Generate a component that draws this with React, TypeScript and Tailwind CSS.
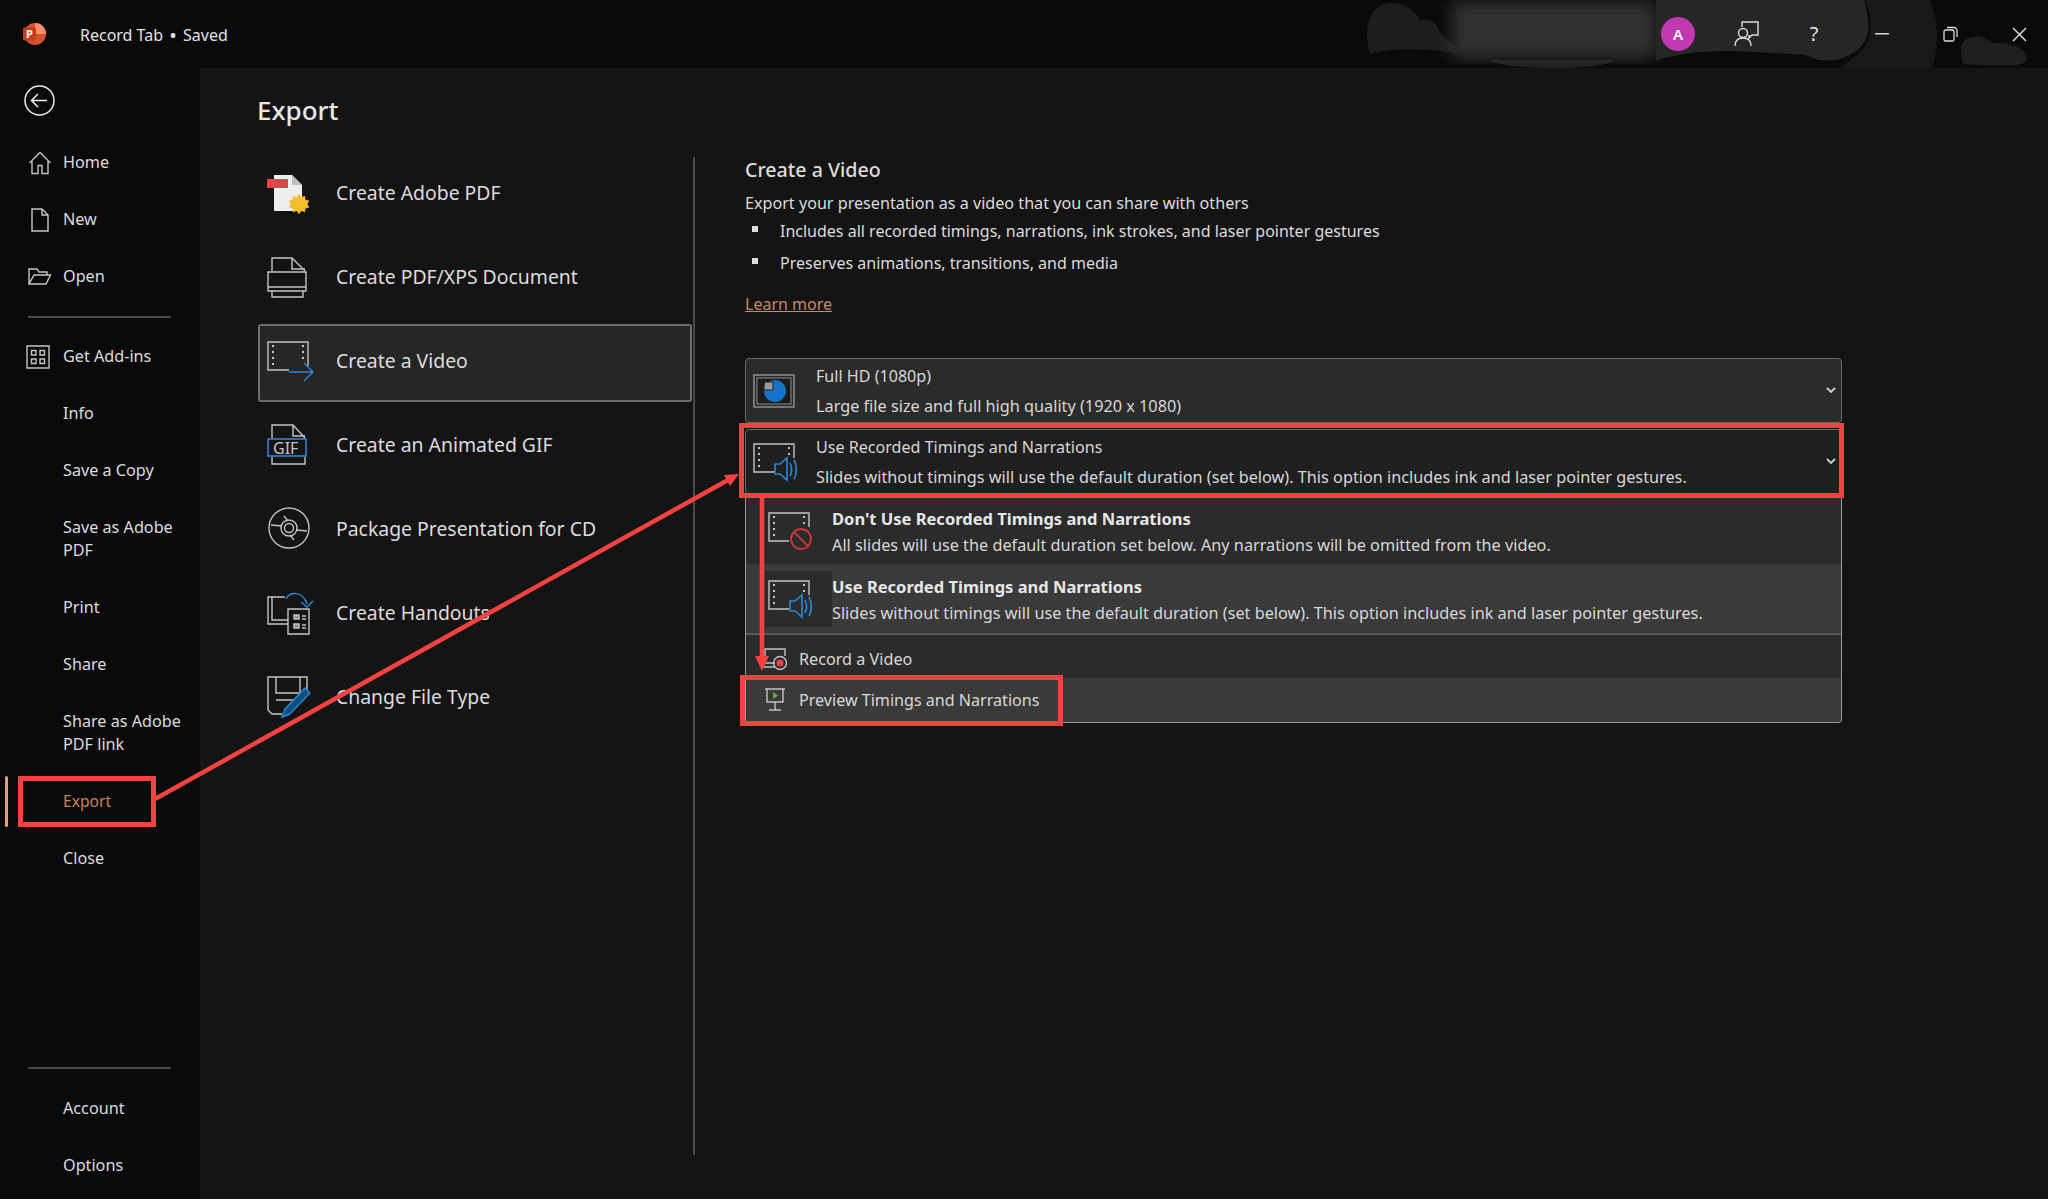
import type { ReactNode } from 'react';

const S = { fill: 'none', stroke: '#c4c4c4', strokeWidth: 1.4 };
const BLUE = '#2b88d8';

function HomeIcon() {
  return (
    <svg width="24" height="24" viewBox="0 0 24 24" {...S}>
      <path d="M1.500 12 12 1.500 22.500 12M4 10v12.500h6v-8h4v8h6V10" />
    </svg>
  );
}
function NewIcon() {
  return (
    <svg width="20" height="24" viewBox="0 0 20 24" {...S}>
      <path d="M2 1h10l6 6v16H2zM12 1v6h6" />
    </svg>
  );
}
function OpenIcon() {
  return (
    <svg width="24" height="18" viewBox="0 0 24 18" {...S}>
      <path d="M1 16V1h8l2 3h8v3M1 16h17l4.500-9H6z" />
    </svg>
  );
}
function AddinsIcon() {
  return (
    <svg className="-ml-[5px]" width="24" height="24" viewBox="0 0 24 24" {...S}>
      <path d="M1 1h22v22H1zM5.500 5.500h4.500v4.500H5.500zM14 5.500h4.500v4.500H14zM5.500 14h4.500v4.500H5.500zM14 14h4.500v4.500H14z" />
    </svg>
  );
}

function PdfIcon() {
  return (
    <svg className="overflow-visible" width="46" height="44" viewBox="0 0 46 44">
      <path d="M7 4h18l10 10v26H7z" fill="#eeeeee" />
      <path d="M25 4v10h10z" fill="#bdbdbd" />
      <rect x="0" y="8" width="21" height="9" fill="#e8414a" />
      <path
        transform="translate(32 34) scale(.92) translate(-34 -31)"
        d="m34 19 2.500 3.500 4-1.500.500 4.300 4.200 1-2.200 3.700 2.200 3.700-4.200 1-.500 4.300-4-1.500-2.500 3.500-2.500-3.500-4 1.500-.500-4.300-4.200-1 2.200-3.700-2.200-3.700 4.200-1 .500-4.300 4 1.500z"
        fill="#f2bd2e"
      />
    </svg>
  );
}
function PrinterIcon() {
  return (
    <svg width="46" height="44" viewBox="0 0 46 44" {...S}>
      <path d="M5 16V3h20l13 13M25 3v11h13" />
      <path d="M1 16h38v19H1zM1 31h38M5 35v6h31v-6" transform="translate(0 1)" />
    </svg>
  );
}
function VideoExportIcon() {
  return (
    <svg width="48" height="44" viewBox="0 0 48 44" {...S}>
      <path d="M22 31H1V3h40v24" />
      <path d="M6 6v2M6 12v2M6 18v2M6 24v2M36 6v2M36 12v2M36 18v2" strokeWidth="2" />
      <path d="M22 33h24M37 24l9 9-9 9" stroke={BLUE} />
    </svg>
  );
}
function GifIcon() {
  return (
    <svg width="46" height="44" viewBox="0 0 46 44" {...S}>
      <path d="M5 15V2h21l12 13M26 2v11h12M5 34v7h33v-7" />
      <rect x="1" y="16" width="38" height="17" stroke={BLUE} strokeWidth="1.600" />
      <text x="6" y="30.500" fill="#c4c4c4" stroke="none" fontSize="16" fontFamily="Noto Sans, sans-serif">
        GIF
      </text>
    </svg>
  );
}
function CdIcon() {
  return (
    <svg width="44" height="44" viewBox="0 0 44 44" {...S}>
      <circle cx="22" cy="21" r="20" />
      <circle cx="22" cy="21" r="8" />
      <circle cx="22" cy="21" r="4.500" />
      <path d="M17 9 21 14M4 18l11 1M27 33l-4-5M40 24l-11-1" />
    </svg>
  );
}
function HandoutsIcon() {
  return (
    <svg width="48" height="44" viewBox="0 0 48 44" {...S}>
      <path d="M18 6H1v27h20M5 6v23h16" />
      <path d="M21 18h21v25H21z" />
      <path d="M27 24h5v4h-5zM27 33h5v4h-5z" fill="#8a8a8a" />
      <path d="M35 25h4M35 28h4M35 34h4M35 37h4" />
      <path d="M19 8c4-8 17-8 21 5M34 11l6 5 6-6" stroke={BLUE} />
    </svg>
  );
}
function FileTypeIcon() {
  return (
    <svg width="48" height="44" viewBox="0 0 48 44" {...S}>
      <path d="M15 39H5l-4-4V2h39v16M9 2v16h24V2M9 25h22" />
      <path d="M15 42l3-8L38 13l5 5-20 21zM15 42l8-3" stroke={BLUE} fill="#0f4f80" />
    </svg>
  );
}

function FilmFrame({ x = 1, y = 2 }: { x?: number; y?: number }) {
  return (
    <g transform={`translate(${x} ${y})`} {...S}>
      <path d="M20 28H0V0h40v14" />
      <path d="M5 3v2M5 9v2M5 15v2M5 21v2M35 3v2M35 9v2" strokeWidth="2" />
    </g>
  );
}
function SpeakerFilmIcon() {
  return (
    <svg width="46" height="40" viewBox="0 0 46 40">
      <FilmFrame />
      <g fill="none" stroke={BLUE} strokeWidth="1.600">
        <path d="M22 22h5l7-6v22l-7-6h-5z" />
        <path d="M37 21c2 4 2 9 0 13M41 18c3 5 3 14 0 19" />
      </g>
    </svg>
  );
}
function NoSpeakerIcon() {
  return (
    <svg width="46" height="40" viewBox="0 0 46 40">
      <FilmFrame />
      <circle cx="33" cy="28" r="10" fill="none" stroke="#d13438" strokeWidth="1.800" />
      <path d="m26 21 14 14" stroke="#d13438" strokeWidth="1.800" />
    </svg>
  );
}
function FullHdIcon() {
  return (
    <svg width="42" height="34" viewBox="0 0 42 34">
      <rect x="1" y="1" width="40" height="32" fill="none" stroke="#8e8e8e" strokeWidth="1.500" />
      <rect x="4" y="4" width="34" height="26" fill="#1c1c1c" stroke="#8e8e8e" />
      <circle cx="22" cy="17" r="11" fill="#1273c9" />
      <path d="M12 8h8v8h-9c0-3 0-6 1-8z" fill="#9a9a9a" stroke="#1c1c1c" />
    </svg>
  );
}
function RecordIcon() {
  return (
    <svg width="24" height="24" viewBox="0 0 24 24" {...S}>
      <path d="M12 16H2V2h20v7M1 20h11" />
      <circle cx="17" cy="16" r="6.500" />
      <circle cx="17" cy="16" r="3.500" fill="#e8414a" stroke="none" />
    </svg>
  );
}
function PreviewIcon() {
  return (
    <svg width="22" height="24" viewBox="0 0 22 24" {...S}>
      <path d="M1 1h20M3 1v13h16V1M11 14v8M5 22h12" />
      <path d="m9 4 5 3.500-5 3.500z" fill="#5fb346" stroke="none" />
    </svg>
  );
}
function Chevron() {
  return (
    <svg width="10" height="7" viewBox="0 0 10 7" fill="none" stroke="#d0d0d0" strokeWidth="1.800">
      <path d="m1 1 4 4 4-4" />
    </svg>
  );
}

const sidebarTop: { label: ReactNode; icon?: ReactNode }[] = [
  { label: 'Home', icon: <HomeIcon /> },
  { label: 'New', icon: <NewIcon /> },
  { label: 'Open', icon: <OpenIcon /> },
];
const sidebarMain: { label: ReactNode; icon?: ReactNode; tall?: boolean; active?: boolean }[] = [
  { label: 'Get Add-ins', icon: <AddinsIcon /> },
  { label: 'Info' },
  { label: 'Save a Copy' },
  { label: 'Save as Adobe PDF', tall: true },
  { label: 'Print' },
  { label: 'Share' },
  { label: 'Share as Adobe PDF link', tall: true },
  { label: 'Export', active: true },
  { label: 'Close' },
];

const exportItems = [
  { label: 'Create Adobe PDF', icon: <PdfIcon /> },
  { label: 'Create PDF/XPS Document', icon: <PrinterIcon /> },
  { label: 'Create a Video', icon: <VideoExportIcon />, selected: true },
  { label: 'Create an Animated GIF', icon: <GifIcon /> },
  { label: 'Package Presentation for CD', icon: <CdIcon /> },
  { label: 'Create Handouts', icon: <HandoutsIcon /> },
  { label: 'Change File Type', icon: <FileTypeIcon /> },
];

function SidebarRow({ label, icon, tall, active }: { label: ReactNode; icon?: ReactNode; tall?: boolean; active?: boolean }) {
  return (
    <div className={`relative flex items-center pl-[63px] pr-4 ${tall ? 'h-[80px]' : 'h-[57px]'}`}>
      {active && <span className="absolute left-[5px] top-[3px] h-[51px] w-[3px] rounded-full bg-[#e0a07a]" />}
      {icon && <span className="absolute left-[26px] flex w-[28px] justify-center">{icon}</span>}
      <span className={`leading-[23px] ${active ? 'text-[15.6px] text-[#c8825a]' : 'text-[16.2px] text-[#dcdcdc]'}`}>{label}</span>
    </div>
  );
}

function TitleArt() {
  return (
    <svg className="absolute inset-0" width="2048" height="68" viewBox="0 0 2048 68">
      <defs>
        <filter id="blur">
          <feGaussianBlur stdDeviation="8" />
        </filter>
      </defs>
      <path d="M1370 54c-6-22-4-50 22-51 14 0 24 8 28 18 10-4 18 2 20 12l16 14v6c-30-4-60-6-86 1z" fill="#1d1d1d" />
      <path d="M1489 60h126c-10 6-30 8-60 8s-56-2-66-8z" fill="#222222" />
      <rect x="1452" y="2" width="204" height="56" fill="#303030" filter="url(#blur)" />
      <path d="M1864 0h66c8 20 10 44 2 68h-92l18-14c16-14 16-34 6-54z" fill="#181818" />
      <path d="M1656 0h208c8 30 8 50-28 60-21 2-26-4-31-5-35-3-85-5-105-3-20 2-35 6-44 8z" fill="#262626" />
      <path d="M1963 64c-4-16-2-27 12-27 8-2 14 4 18 6 12 0 32 2 33 15 0 6-2 10-63 6z" fill="#1f1f1f" />
    </svg>
  );
}

function TitleBar() {
  return (
    <header className="relative h-[68px] bg-[#0a0a0a] text-[#e2e2e2]">
      <TitleArt />
      <div className="relative flex h-full items-center">
        <svg className="ml-[22px]" width="24" height="24" viewBox="0 0 24 24">
          <circle cx="13" cy="12" r="11" fill="#d35230" />
          <path d="M13 1a11 11 0 0 1 11 11H13z" fill="#ff8f6b" />
          <rect x="1" y="5.500" width="13" height="13" rx="1.500" fill="#c43e1c" />
          <text x="4" y="16" fontSize="11" fontWeight="700" fill="#ffffff" fontFamily="Noto Sans, sans-serif">
            P
          </text>
        </svg>
        <div className="ml-[34px] flex pt-[1px] text-[16px]">
          <span>Record Tab</span>
          <span className="w-[20px] text-center font-bold">•</span>
          <span>Saved</span>
        </div>
        <div className="ml-auto flex items-center">
          <span className="flex h-[34px] w-[34px] items-center justify-center rounded-full bg-[#c239b3] text-[15px] font-semibold text-white">
            A
          </span>
          <svg className="ml-[39px]" width="26" height="26" viewBox="0 0 26 26" fill="none" stroke="#dcdcdc" strokeWidth="1.400">
            <path d="M8 6V1h16v13h-6l-3 3v-3" />
            <circle cx="9" cy="12" r="4.500" />
            <path d="M1 25c0-5 3-8 8-8s8 3 8 8" />
          </svg>
          <span className="ml-[46px] w-[16px] text-center text-[20px] leading-none">?</span>
          <svg className="ml-[53px]" width="14" height="2" viewBox="0 0 14 2">
            <rect width="14" height="1.500" fill="#dcdcdc" />
          </svg>
          <svg className="ml-[54px]" width="15" height="16" viewBox="0 0 15 16" fill="none" stroke="#dcdcdc" strokeWidth="1.300">
            <rect x="1" y="4" width="10" height="11" rx="1.500" />
            <path d="M4 1.500h7a3 3 0 0 1 3 3V11" />
          </svg>
          <svg className="ml-[54px] mr-[21px]" width="15" height="15" viewBox="0 0 15 15" stroke="#e6e6e6" strokeWidth="1.400">
            <path d="m1 1 13 13M14 1 1 14" />
          </svg>
        </div>
      </div>
    </header>
  );
}

function Sidebar() {
  return (
    <aside className="flex w-[200px] shrink-0 flex-col bg-[#0a0a0a] pb-[5px]">
      <div className="flex h-[66px] shrink-0 items-center pb-[2px] pl-[24px]">
        <svg width="31" height="31" viewBox="0 0 31 31" fill="none" stroke="#ececec" strokeWidth="1.500">
          <circle cx="15.500" cy="15.500" r="14.500" />
          <path d="M23 15.500H8M14 9l-6.500 6.500L14 22" />
        </svg>
      </div>
      {sidebarTop.map((item, i) => (
        <SidebarRow key={i} {...item} />
      ))}
      <div className="flex h-[23px] items-center pl-[28px]">
        <div className="h-[2px] w-[143px] bg-[#4a4a4a]" />
      </div>
      {sidebarMain.map((item, i) => (
        <SidebarRow key={i} {...item} />
      ))}
      <div className="mt-auto pl-[28px]">
        <div className="h-[2px] w-[143px] bg-[#4a4a4a]" />
      </div>
      <div className="pt-[11px]">
        <SidebarRow label="Account" />
        <SidebarRow label="Options" />
      </div>
    </aside>
  );
}

function OptionBox({ icon, title, desc, dark }: { icon: ReactNode; title: string; desc: string; dark?: boolean }) {
  return (
    <div
      className={`flex h-[65px] items-center rounded-[4px] border border-[#6a6a6a] pl-[7px] pr-[5px] ${dark ? 'bg-[#1f1f1f]' : 'bg-[#2b2b2b]'}`}
    >
      <span className="flex w-[63px] shrink-0">{icon}</span>
      <div className="flex-1 leading-[30px] text-[#d8d8d8]">
        <p className="text-[16.1px]">{title}</p>
        <p className="text-[16.25px]">{desc}</p>
      </div>
      <Chevron />
    </div>
  );
}

function MenuOption({ icon, title, desc, hovered }: { icon: ReactNode; title: string; desc: string; hovered?: boolean }) {
  return (
    <div className={`flex items-center pl-[19px] ${hovered ? 'h-[69px] bg-[#3a3a3a]' : 'h-[66px]'}`}>
      <span className={`flex h-[56px] w-[67px] shrink-0 items-center pl-[3px] ${hovered ? 'bg-[#2b2b2b]' : ''}`}>{icon}</span>
      <div className="pt-[2px] leading-[26px] text-[#d8d8d8]">
        <p className="text-[16.5px] font-bold text-[#e8e8e8]">{title}</p>
        <p className="text-[16.25px]">{desc}</p>
      </div>
    </div>
  );
}

function VideoPanel() {
  return (
    <section className="ml-[50px] w-[1097px] pt-[2px] text-[#dcdcdc]">
      <h2 className="text-[19.6px] font-medium leading-[28px]">Create a Video</h2>
      <p className="mt-[5px] text-[16.15px] leading-[28px]">Export your presentation as a video that you can share with others</p>
      <ul className="text-[16px] leading-[28px]">
        <li className="relative pl-[35px] before:absolute before:left-[7px] before:top-[9px] before:h-[6px] before:w-[6px] before:bg-[#dcdcdc]">
          Includes all recorded timings, narrations, ink strokes, and laser pointer gestures
        </li>
        <li className="relative mt-[4px] pl-[35px] before:absolute before:left-[7px] before:top-[9px] before:h-[6px] before:w-[6px] before:bg-[#dcdcdc]">
          Preserves animations, transitions, and media
        </li>
      </ul>
      <a className="mt-[13px] block text-[16px] leading-[28px] text-[#c98a68] underline">Learn more</a>

      <div className="mt-[40px] flex flex-col gap-[6px]">
        <OptionBox
          icon={<FullHdIcon />}
          title="Full HD (1080p)"
          desc="Large file size and full high quality (1920 x 1080)"
        />
        <div>
          <OptionBox
            dark
            icon={<SpeakerFilmIcon />}
            title="Use Recorded Timings and Narrations"
            desc="Slides without timings will use the default duration (set below). This option includes ink and laser pointer gestures."
          />
          <div className="overflow-hidden rounded-b-[4px] border border-t-0 border-[#9a9a9a] bg-[#2b2b2b] pt-[4px]">
            <MenuOption
              icon={<NoSpeakerIcon />}
              title="Don't Use Recorded Timings and Narrations"
              desc="All slides will use the default duration set below. Any narrations will be omitted from the video."
            />
            <MenuOption
              hovered
              icon={<SpeakerFilmIcon />}
              title="Use Recorded Timings and Narrations"
              desc="Slides without timings will use the default duration (set below). This option includes ink and laser pointer gestures."
            />
            <div className="h-[2px] bg-[#5a5a5a]" />
            <div className="flex h-[43px] items-center pl-[17px] pt-[5px] text-[16.2px] text-[#d8d8d8]">
              <RecordIcon />
              <span className="ml-[12px]">Record a Video</span>
            </div>
            <div className="flex h-[44px] items-center bg-[#3a3a3a] pl-[18px] text-[16.1px] text-[#d8d8d8]">
              <PreviewIcon />
              <span className="ml-[13px]">Preview Timings and Narrations</span>
            </div>
          </div>
        </div>
      </div>
    </section>
  );
}

function Annotations() {
  return (
    <>
      <div className="absolute left-[18px] top-[776px] h-[51px] w-[138px] border-[5px] border-[#f44242]" />
      <div className="absolute left-[739px] top-[423px] h-[75px] w-[1105px] border-[5px] border-[#f44242]" />
      <div className="absolute left-[740px] top-[675px] h-[51px] w-[323px] border-[5px] border-[#f44242]" />
      <svg className="pointer-events-none absolute inset-0" width="2048" height="1199" viewBox="0 0 2048 1199">
        <path d="M155 799 728 480" stroke="#f44242" strokeWidth="4.500" />
        <path d="m739 474-15 1 6 11z" fill="#f44242" />
        <path d="M762 498v160" stroke="#f44242" strokeWidth="4.500" />
        <path d="m755 656 7 15 7-15z" fill="#f44242" />
      </svg>
    </>
  );
}

export default function App() {
  return (
    <div className="relative h-[1199px] w-[2048px] overflow-hidden bg-[#141414] font-['Noto_Sans','Open_Sans',sans-serif]">
      <TitleBar />
      <div className="flex h-[1131px]">
        <Sidebar />
        <main className="flex-1 pl-[57px] pt-[22px]">
          <h1 className="h-[40px] text-[26px] font-medium leading-[40px] text-[#e8e8e8]">Export</h1>
          <div className="mt-[24px] flex pl-[1px]">
            <div className="flex w-[434px] flex-col gap-[6px]">
              {exportItems.map((item, i) => (
                <div
                  key={i}
                  className={`flex h-[78px] items-center rounded-[3px] text-[19.4px] text-[#dcdcdc] ${item.selected ? '-mb-[2px] mt-[2px] border-2 border-[#6e6e6e] bg-[#262626] pb-[4px] pl-[7px]' : 'pl-[9px]'}`}
                >
                  <span className="flex w-[69px] shrink-0">{item.icon}</span>
                  {item.label}
                </div>
              ))}
            </div>
            <div className="ml-[1px] mt-[3px] h-[998px] w-[2px] bg-[#4a4a4a]" />
            <VideoPanel />
          </div>
        </main>
      </div>
      <Annotations />
    </div>
  );
}
